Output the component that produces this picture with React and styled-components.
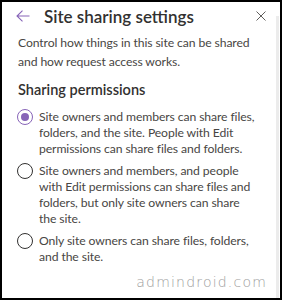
import React from 'react';
import styled, { createGlobalStyle } from 'styled-components';

const GlobalStyle = createGlobalStyle`
  html, body {
    margin: 0;
    padding: 0;
    background: #ffffff;
  }
  body {
    font-family: Lato, "Noto Sans", sans-serif;
  }
`;

const Frame = styled.div`
  box-sizing: border-box;
  width: 282px;
  height: 300px;
  border: 2px solid #000;
  display: flex;
  flex-direction: row;
  background: #fff;
  overflow: hidden;
`;

const Content = styled.div`
  flex: 1;
  display: flex;
  flex-direction: column;
  padding: 0 0 0 14px;
`;

const Track = styled.div`
  width: 3px;
  margin: 14px 1px 0 0;
  background: #ececec;
`;

const Header = styled.div`
  display: flex;
  align-items: center;
  height: 28px;
`;

const IconButton = styled.span`
  display: flex;
  align-items: center;
  justify-content: center;
  width: ${(p) => p.$w}px;
`;

const Title = styled.h1`
  flex: 1;
  margin: 0 0 0 14px;
  font-size: 17px;
  font-weight: 600;
  color: #323130;
`;

const Description = styled.p`
  margin: 3px 0 0 2px;
  width: 242px;
  font-size: 12.2px;
  letter-spacing: -0.1px;
  line-height: 19px;
  color: #484644;
`;

const SectionTitle = styled.h2`
  margin: 10px 0 11px 2px;
  font-size: 14.5px;
  font-weight: 600;
  color: #323130;
`;

const Options = styled.div`
  display: flex;
  flex-direction: column;
  gap: 6px;
`;

const Option = styled.label`
  display: flex;
  flex-direction: row;
  align-items: flex-start;
`;

const Radio = styled.span`
  box-sizing: border-box;
  flex: none;
  width: 16px;
  height: 16px;
  margin: 0 6px 0 1px;
  border-radius: 50%;
  border: 1px solid ${(p) => (p.$checked ? '#8764b8' : '#323130')};
  display: flex;
  align-items: center;
  justify-content: center;

  &::after {
    content: '';
    width: 8px;
    height: 8px;
    border-radius: 50%;
    background: ${(p) => (p.$checked ? '#8764b8' : 'transparent')};
  }
`;

const OptionText = styled.span`
  font-size: 12.2px;
  letter-spacing: -0.1px;
  line-height: 16px;
  color: #484644;
  width: 217px;
`;

const Watermark = styled.div`
  margin-top: auto;
  margin-bottom: 8px;
  align-self: flex-end;
  margin-right: 9px;
  font-family: "DejaVu Sans", sans-serif;
  font-weight: 200;
  font-size: 14px;
  letter-spacing: 1.2px;
  color: #9c9c9c;
`;

const options = [
  {
    text: 'Site owners and members can share files, folders, and the site. People with Edit permissions can share files and folders.',
    checked: true,
  },
  {
    text: 'Site owners and members, and people with Edit permissions can share files and folders, but only site owners can share the site.',
  },
  { text: 'Only site owners can share files, folders, and the site.' },
];

export default function App() {
  return (
    <>
      <GlobalStyle />
      <Frame>
        <Content>
          <Header>
            <IconButton $w={14}>
              <svg width="14" height="12" viewBox="0 0 14 12" fill="none" stroke="#8764b8" strokeWidth="1.1">
                <path d="M13.5 6H1M6.5 0.6L1 6l5.5 5.4" />
              </svg>
            </IconButton>
            <Title>Site sharing settings</Title>
            <IconButton $w={30}>
              <svg width="10" height="10" viewBox="0 0 10 10" stroke="#605e5c" strokeWidth="1">
                <path d="M0.5 0.5l9 9M9.5 0.5l-9 9" />
              </svg>
            </IconButton>
          </Header>
          <Description>Control how things in this site can be shared and how request access works.</Description>
          <SectionTitle>Sharing permissions</SectionTitle>
          <Options>
            {options.map((o, i) => (
              <Option key={i}>
                <Radio $checked={o.checked} />
                <OptionText>{o.text}</OptionText>
              </Option>
            ))}
          </Options>
          <Watermark>admindroid.com</Watermark>
        </Content>
        <Track />
      </Frame>
    </>
  );
}
